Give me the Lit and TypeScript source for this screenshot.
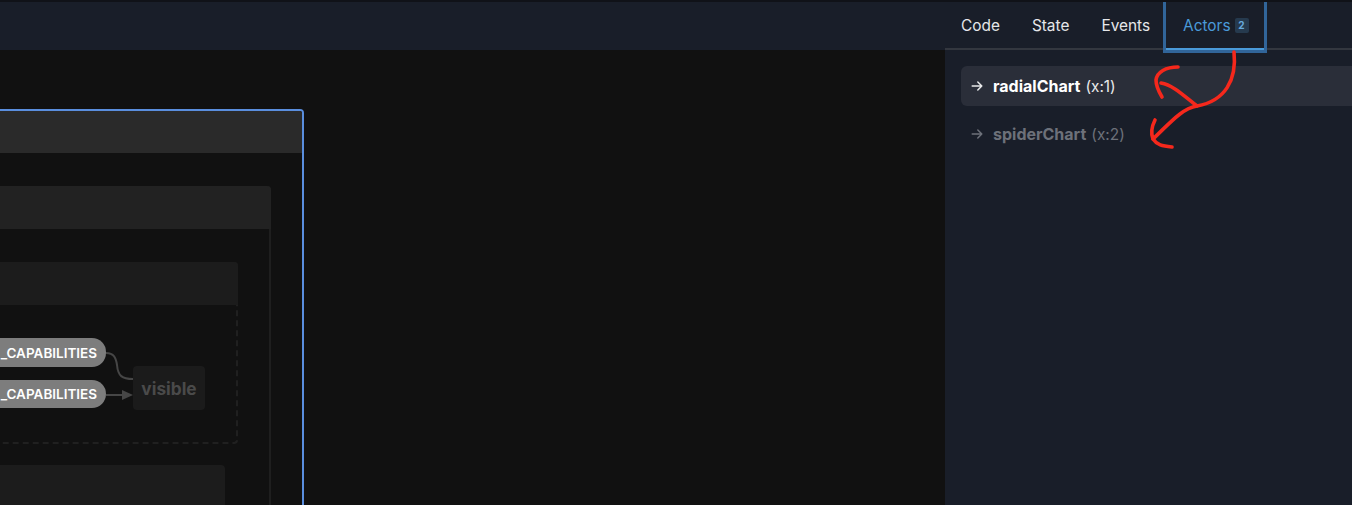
import { LitElement, html, css, svg } from "lit";
import { customElement } from "lit/decorators.js";

const arrow = svg`<svg class="arr" width="12" height="12" viewBox="0 0 12 12" fill="none" stroke="currentColor" stroke-width="1.5" stroke-linecap="round" stroke-linejoin="round"><path d="M1.2 6H10.8M6.8 2L10.8 6L6.8 10"/></svg>`;

@customElement("app-root")
export class AppRoot extends LitElement {
  static styles = css`
    :host { display: block; width: 1352px; height: 505px; position: relative; overflow: hidden; background: #111111; font-family: Inter, "Noto Sans", sans-serif; }
    .top { height: 50px; box-sizing: border-box; background: #191e29; border-top: 2px solid #101218; display: flex; justify-content: flex-end; }
    .main { display: flex; height: 455px; }
    .canvas { flex: 1; position: relative; overflow: hidden; background: #111111; }
    .panel { width: 407px; flex: none; background: #191e29; box-sizing: border-box; padding: 16px 0 0 16px; display: flex; flex-direction: column; gap: 8px; }
    .tabs { width: 407px; box-sizing: border-box; display: flex; align-items: stretch; border-bottom: 2px solid #33373f; background: #191e29; }
    .tab { padding: 0 16px; display: flex; align-items: center; gap: 4px; color: #e6e7ea; font-size: 15.4px; line-height: 17px; }
    .tab.active { color: #4a9ad9; padding-left: 17px; padding-right: 19px; }
    .badge { width: 14px; height: 15px; border-radius: 2px; background: #263a4e; color: #67a9dd; font-size: 10px; font-weight: 700; display: flex; align-items: center; justify-content: center; }
    .row { height: 40px; border-radius: 6px 0 0 6px; display: flex; align-items: center; padding-left: 10px; font-size: 15.4px; color: #c4c6ca; }
    .row.on { background: #2a2e39; color: #e8e9ea; }
    .row.off { color: #6d717a; }
    .row b { font-weight: 700; font-size: 16px; margin-left: 10px; margin-right: 5px; }
    .row.on b { color: #ffffff; }
    .arr { flex: none; }
    .node { position: absolute; box-sizing: border-box; }
    .n1 { left: -40px; top: 59px; width: 344px; height: 420px; border: 2px solid #5a8ede; border-radius: 4px; background: #111111; }
    .n1 .h { height: 42px; background: #2a2a2a; border-radius: 2px 2px 0 0; }
    .n2 { left: -40px; top: 136px; width: 311px; height: 400px; border-right: 2px solid #1f1f1f; border-radius: 4px; }
    .n2 .h { height: 43px; background: #222222; border-radius: 4px 4px 0 0; margin-right: -2px; }
    .n3 { left: -40px; top: 212px; width: 278px; height: 182px; border-right: 2px dashed #202020; border-bottom: 2px dashed #202020; border-radius: 4px; }
    .n3 .h { height: 43px; background: #1c1c1c; border-radius: 4px 4px 0 0; margin-right: -2px; }
    .n4 { left: -40px; top: 415px; width: 265px; height: 80px; background: #1c1c1c; border-radius: 4px; }
    .visible { position: absolute; left: 133px; top: 316px; width: 72px; height: 44px; background: #1b1b1b; border-radius: 4px; color: #4a4a4a; font-weight: 700; font-size: 17.3px; display: flex; align-items: center; justify-content: center; }
    .pill { position: absolute; left: -8px; width: 114px; box-sizing: border-box; padding-right: 9px; background: #7d7d7d; border-radius: 0 14px 14px 0; color: #fff; font-size: 13.5px; font-weight: 600; display: flex; align-items: center; justify-content: flex-end; white-space: nowrap; }
    .p1 { top: 288px; height: 29px; }
    .p2 { top: 330px; height: 28px; }
    .edges { position: absolute; left: 0; top: 0; }
    .hl { position: absolute; left: 1163px; top: 2px; width: 104px; height: 51px; box-sizing: border-box; border: 3px solid #31659a; border-top: none; }
    .hl::after { content: ""; position: absolute; left: 0; right: 0; bottom: 0; height: 2px; background: #4a9ad9; }
    .red { position: absolute; left: 0; top: 0; pointer-events: none; }
  `;

  render() {
    return html`
      <div class="top">
        <div class="tabs">
          <div class="tab">Code</div>
          <div class="tab">State</div>
          <div class="tab">Events</div>
          <div class="tab active">Actors <span class="badge">2</span></div>
        </div>
      </div>
      <div class="main">
        <div class="canvas">
          <div class="node n1"><div class="h"></div></div>
          <div class="node n2"><div class="h"></div></div>
          <div class="node n3"><div class="h"></div></div>
          <div class="node n4"></div>
          <svg class="edges" width="300" height="400" fill="none" stroke="#464646" stroke-width="2">
            <path d="M106 303C114 303 116 308 117 315C118 326 122 329 133 329"/>
            <path d="M106 345H124"/>
            <path d="M122 340L133 345L122 350Z" fill="#464646" stroke="none"/>
          </svg>
          <div class="pill p1">_CAPABILITIES</div>
          <div class="pill p2">_CAPABILITIES</div>
          <div class="visible">visible</div>
        </div>
        <div class="panel">
          <div class="row on">${arrow}<b>radialChart</b> (x:1)</div>
          <div class="row off">${arrow}<b>spiderChart</b> (x:2)</div>
        </div>
      </div>
      <div class="hl"></div>
      <svg class="red" width="1352" height="505" fill="none" stroke="#f5281c" stroke-width="3.6" stroke-linecap="round" stroke-linejoin="round">
        <path d="M1234 52C1237 80 1225 101 1197 106"/>
        <path d="M1178 67C1166 67 1157 72 1156 80C1156 86 1159 92 1162 97"/>
        <path d="M1161 83C1173 85 1183 95 1197 106C1182 108 1168 125 1153 139"/>
        <path d="M1155 120C1151 128 1151 134 1153 139C1157 145 1162 146 1172 147"/>
      </svg>
    `;
  }
}
